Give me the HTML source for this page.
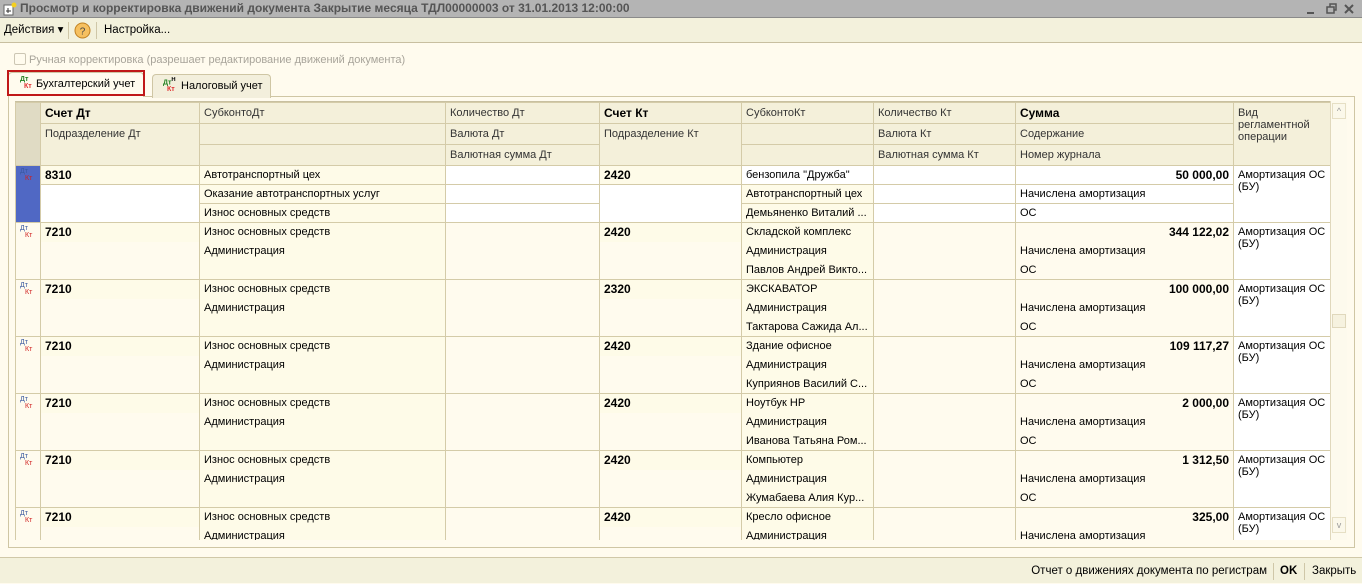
<!DOCTYPE html>
<html><head><meta charset="utf-8"><style>
*{margin:0;padding:0;box-sizing:border-box}
body{width:1362px;height:583px;overflow:hidden;background:#fffbee;font-family:"Liberation Sans",Arial,sans-serif;font-size:11px;color:#000;position:relative}
.abs{position:absolute}
#title{left:0;top:0;width:1362px;height:18px;background:#b4b4b4;border-bottom:1px solid #8a8a8a;color:#555;font-weight:bold;font-size:12px;line-height:17px;padding-left:20px;white-space:nowrap}
#tb{left:0;top:18px;width:1362px;height:25px;background:#f3f1dc;border-bottom:1px solid #c8bfa0;font-size:11.5px;line-height:25px}
.sep{position:absolute;top:4px;width:1px;height:17px;background:#cfc7a8}
#chk{left:14px;top:53px;color:#a8a49a;font-size:11px}
.tab{position:absolute;height:24px;font-size:11px;line-height:22px;border:1px solid #cfc6a4;border-bottom:none;border-radius:4px 4px 0 0;background:#f3efdc;white-space:nowrap}
#panel{left:8px;top:96px;width:1347px;height:452px;border:1px solid #cfc6a4;background:#fffbee}
#grid{left:15px;top:101px;width:1315px;height:439px;overflow:hidden;border-top:1px solid #c8c0a0}
table{border-collapse:collapse;table-layout:fixed;width:1315px}
td{border-left:1px solid #d4cba8;border-right:1px solid #d4cba8;height:19px;padding:0 4px;white-space:nowrap;overflow:hidden;vertical-align:middle;font-size:11px}
thead td{background:#f4f0da;height:21px;border:1px solid #d4cba8;color:#333}
thead td.hb{font-weight:bold;color:#000;font-size:12px}
.b{font-weight:bold;font-size:12px}
.y{background:#fefbe8}
.r{text-align:right}
tr.l td,td.rs{border-bottom:1px solid #d4cba8}
tr.g td{border-bottom:1px solid #d4cba8}
td.ind{padding:0;vertical-align:top;background:#fffbee;position:relative}
td.sel{background:#5068c4}
td.vid{vertical-align:top;padding-top:3px;line-height:12px;white-space:normal;background:#fff}
.ic{position:absolute;left:4px;top:2px;font-size:7px;line-height:7px}
.ic i{font-style:normal;color:#3a5aa0;display:block}
.ic b{color:#d02020;display:block;margin-left:5px;font-weight:normal}
#sb{left:1330px;top:101px;width:17px;height:439px;background:#fdfaed;border-left:1px solid #e0d8bc}
#foot{left:0;top:557px;width:1362px;height:26px;background:#f3f1dc;border-top:1px solid #d0c8a8;font-size:11.5px;line-height:26px}
</style></head><body>
<div id="title" class="abs">Просмотр и корректировка движений документа Закрытие месяца ТДЛ00000003 от 31.01.2013 12:00:00</div>
<svg class="abs" style="left:3px;top:2px" width="14" height="14"><rect x="1" y="3" width="9" height="10" fill="#fff" stroke="#666"/><path d="M5 6v5M3 9h5" stroke="#333"/><circle cx="11" cy="3" r="2.5" fill="#f5d020"/></svg>
<svg class="abs" style="left:1302px;top:2px" width="56" height="14"><path d="M5 11h7" stroke="#555" stroke-width="2"/><rect x="25" y="5" width="7" height="6" fill="none" stroke="#555" stroke-width="1.5"/><path d="M28 5V2h6v6h-2" fill="none" stroke="#555" stroke-width="1.5"/><path d="M43 3l8 8M51 3l-8 8" stroke="#555" stroke-width="2"/></svg>
<div id="tb" class="abs"><span class="abs" style="left:4px">Действия ▾</span><div class="sep" style="left:68px"></div>
<svg class="abs" style="left:74px;top:4px" width="17" height="17"><circle cx="8.5" cy="8.5" r="7.5" fill="#f6c060" stroke="#c08020"/><text x="8.5" y="12.5" font-size="10" text-anchor="middle" fill="#444" font-family="Liberation Sans">?</text></svg>
<div class="sep" style="left:96px"></div><span class="abs" style="left:104px">Настройка...</span></div>
<div id="chk" class="abs"><span style="display:inline-block;width:12px;height:12px;border:1px solid #ccc6b4;border-radius:2px;vertical-align:-2px;margin-right:3px"></span>Ручная корректировка (разрешает редактирование движений документа)</div>
<div id="panel" class="abs"></div>
<div class="tab" style="left:8px;top:72px;width:136px;background:#fffbee;height:25px;z-index:2"><span style="position:absolute;left:11px;top:3px;font-size:7px;line-height:7px;color:#208020;font-weight:bold">Дт<br><span style="color:#e03030;margin-left:4px">Кт</span></span><span style="position:absolute;left:27px">Бухгалтерский учет</span></div>
<div class="abs" style="left:7px;top:70px;width:138px;height:26px;border:2px solid #c01818;z-index:3"></div>
<div class="tab" style="left:152px;top:74px;width:119px"><span style="position:absolute;left:10px;top:2px;font-size:7px;line-height:7px;color:#208020;font-weight:bold">Дт<sup style="color:#000">Н</sup><br><span style="color:#e03030;margin-left:4px">Кт</span></span><span style="position:absolute;left:28px">Налоговый учет</span></div>
<div id="grid" class="abs"><table>
<colgroup><col style="width:25px"><col style="width:159px"><col style="width:246px"><col style="width:154px"><col style="width:142px"><col style="width:132px"><col style="width:142px"><col style="width:218px"><col style="width:97px"></colgroup>
<thead>
<tr><td rowspan="3" style="background:#e0dbc4"></td><td class="hb">Счет Дт</td><td>СубконтоДт</td><td>Количество Дт</td><td class="hb">Счет Кт</td><td>СубконтоКт</td><td>Количество Кт</td><td class="hb">Сумма</td><td rowspan="3" style="vertical-align:top;white-space:normal;line-height:12px;padding-top:4px">Вид регламентной операции</td></tr>
<tr><td rowspan="2" style="vertical-align:top;padding-top:4px">Подразделение Дт</td><td></td><td>Валюта Дт</td><td rowspan="2" style="vertical-align:top;padding-top:4px">Подразделение Кт</td><td></td><td>Валюта Кт</td><td>Содержание</td></tr>
<tr><td></td><td>Валютная сумма Дт</td><td></td><td>Валютная сумма Кт</td><td>Номер журнала</td></tr>
</thead>
<tbody>
<tr class="g"><td rowspan="3" class="ind sel rs"><span class="ic"><i>Дт</i><b>Кт</b></span></td><td class="b y">8310</td><td class="y">Автотранспортный цех</td><td style="background:#fff"></td><td class="b y">2420</td><td style="background:#fff">бензопила "Дружба"</td><td style="background:#fff"></td><td class="r b" style="background:#fff">50 000,00</td><td rowspan="3" class="vid rs">Амортизация ОС (БУ)</td></tr>
<tr class="g"><td rowspan="2" class="rs" style="background:#fff"></td><td class="y">Оказание автотранспортных услуг</td><td style="background:#fff"></td><td rowspan="2" class="rs" style="background:#fff"></td><td class="y">Автотранспортный цех</td><td style="background:#fff"></td><td style="background:#fff">Начислена амортизация</td></tr>
<tr class="g"><td class="y">Износ основных средств</td><td style="background:#fff"></td><td class="y">Демьяненко Виталий ...</td><td style="background:#fff"></td><td style="background:#fff">ОС</td></tr>

<tr><td rowspan="3" class="ind rs"><span class="ic"><i>Дт</i><b>Кт</b></span></td><td class="b y">7210</td><td class="y">Износ основных средств</td><td></td><td class="b y">2420</td><td class="y">Складской комплекс</td><td></td><td class="r b">344 122,02</td><td rowspan="3" class="vid rs">Амортизация ОС (БУ)</td></tr>
<tr><td></td><td class="y">Администрация</td><td></td><td></td><td class="y">Администрация</td><td></td><td>Начислена амортизация</td></tr>
<tr class="l"><td></td><td class="y"></td><td></td><td></td><td class="y">Павлов Андрей Викто...</td><td></td><td>ОС</td></tr>

<tr><td rowspan="3" class="ind rs"><span class="ic"><i>Дт</i><b>Кт</b></span></td><td class="b y">7210</td><td class="y">Износ основных средств</td><td></td><td class="b y">2320</td><td class="y">ЭКСКАВАТОР</td><td></td><td class="r b">100 000,00</td><td rowspan="3" class="vid rs">Амортизация ОС (БУ)</td></tr>
<tr><td></td><td class="y">Администрация</td><td></td><td></td><td class="y">Администрация</td><td></td><td>Начислена амортизация</td></tr>
<tr class="l"><td></td><td class="y"></td><td></td><td></td><td class="y">Тактарова Сажида Ал...</td><td></td><td>ОС</td></tr>

<tr><td rowspan="3" class="ind rs"><span class="ic"><i>Дт</i><b>Кт</b></span></td><td class="b y">7210</td><td class="y">Износ основных средств</td><td></td><td class="b y">2420</td><td class="y">Здание офисное</td><td></td><td class="r b">109 117,27</td><td rowspan="3" class="vid rs">Амортизация ОС (БУ)</td></tr>
<tr><td></td><td class="y">Администрация</td><td></td><td></td><td class="y">Администрация</td><td></td><td>Начислена амортизация</td></tr>
<tr class="l"><td></td><td class="y"></td><td></td><td></td><td class="y">Куприянов Василий С...</td><td></td><td>ОС</td></tr>

<tr><td rowspan="3" class="ind rs"><span class="ic"><i>Дт</i><b>Кт</b></span></td><td class="b y">7210</td><td class="y">Износ основных средств</td><td></td><td class="b y">2420</td><td class="y">Ноутбук HP</td><td></td><td class="r b">2 000,00</td><td rowspan="3" class="vid rs">Амортизация ОС (БУ)</td></tr>
<tr><td></td><td class="y">Администрация</td><td></td><td></td><td class="y">Администрация</td><td></td><td>Начислена амортизация</td></tr>
<tr class="l"><td></td><td class="y"></td><td></td><td></td><td class="y">Иванова Татьяна Ром...</td><td></td><td>ОС</td></tr>

<tr><td rowspan="3" class="ind rs"><span class="ic"><i>Дт</i><b>Кт</b></span></td><td class="b y">7210</td><td class="y">Износ основных средств</td><td></td><td class="b y">2420</td><td class="y">Компьютер</td><td></td><td class="r b">1 312,50</td><td rowspan="3" class="vid rs">Амортизация ОС (БУ)</td></tr>
<tr><td></td><td class="y">Администрация</td><td></td><td></td><td class="y">Администрация</td><td></td><td>Начислена амортизация</td></tr>
<tr class="l"><td></td><td class="y"></td><td></td><td></td><td class="y">Жумабаева Алия Кур...</td><td></td><td>ОС</td></tr>

<tr><td rowspan="3" class="ind rs"><span class="ic"><i>Дт</i><b>Кт</b></span></td><td class="b y">7210</td><td class="y">Износ основных средств</td><td></td><td class="b y">2420</td><td class="y">Кресло офисное</td><td></td><td class="r b">325,00</td><td rowspan="3" class="vid rs">Амортизация ОС (БУ)</td></tr>
<tr><td></td><td class="y">Администрация</td><td></td><td></td><td class="y">Администрация</td><td></td><td>Начислена амортизация</td></tr>
<tr class="l"><td></td><td class="y"></td><td></td><td></td><td class="y">—</td><td></td><td>ОС</td></tr>
</tbody></table></div>
<div id="sb" class="abs">
<div class="abs" style="left:1px;top:2px;width:14px;height:16px;border:1px solid #e6dfc4;background:#fbf8ea;color:#999;font-size:9px;text-align:center;line-height:14px">^</div>
<div class="abs" style="left:1px;top:213px;width:14px;height:14px;border:1px solid #e0d8bc;background:#f6f2df"></div>
<div class="abs" style="left:1px;top:416px;width:14px;height:16px;border:1px solid #e6dfc4;background:#fbf8ea;color:#999;font-size:9px;text-align:center;line-height:14px">v</div>
</div>
<div id="foot" class="abs"><span class="abs" style="right:95px">Отчет о движениях документа по регистрам</span><div class="sep" style="left:1273px;top:5px"></div><span class="abs" style="left:1280px;font-weight:bold">OK</span><div class="sep" style="left:1304px;top:5px"></div><span class="abs" style="left:1312px">Закрыть</span></div>
</body></html>
